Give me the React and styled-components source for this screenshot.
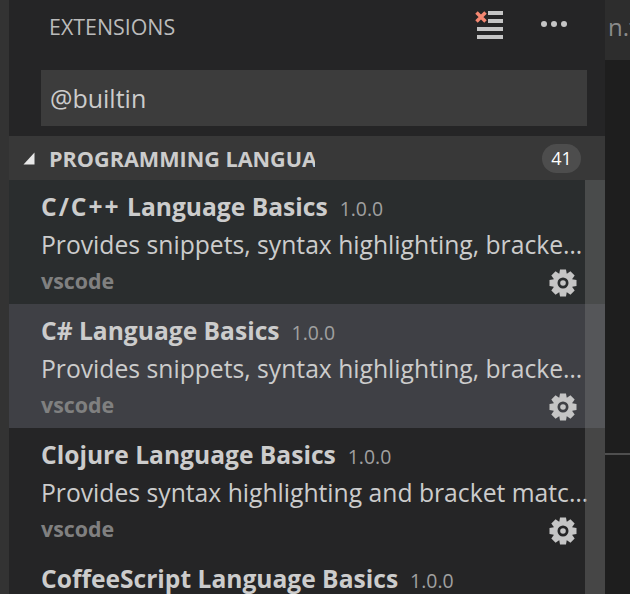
import React from 'react'
import styled, { createGlobalStyle } from 'styled-components'

const GlobalStyle = createGlobalStyle`
  html, body {
    margin: 0;
    padding: 0;
    background: #1e1e1e;
  }
  body {
    font-family: "Open Sans", "Noto Sans", sans-serif;
  }
`
const Window = styled.div`
  display: flex;
  width: 630px;
  height: 594px;
  overflow: hidden;
`
const ActivityBar = styled.div`
  width: 9px;
  flex: none;
  background: #333333;
`
const SideBar = styled.div`
  width: 596px;
  flex: none;
  background: #252526;
  display: flex;
  flex-direction: column;
`
const TitleBar = styled.div`
  display: flex;
  align-items: center;
  height: 52px;
  padding: 0 37px 0 40px;
`
const Title = styled.div`
  flex: 1;
  color: #bbbbbb;
  font-size: 21.4px;
`
const TitleActions = styled.div`
  display: flex;
  align-items: center;
  gap: 35px;
`
const SearchWrap = styled.div`
  padding: 18px 18px 10px 32px;
`
const SearchBox = styled.div`
  height: 56px;
  line-height: 56px;
  padding-left: 9px;
  background: #3c3c3c;
  color: #cccccc;
  font-size: 25px;
`
const SectionHeader = styled.div`
  display: flex;
  align-items: center;
  height: 44px;
  background: #383838;
  padding: 0 24px 0 14px;
`
const SectionTitle = styled.div`
  width: 266px;
  margin-left: 14px;
  overflow: hidden;
  white-space: nowrap;
  color: #cccccc;
  font-size: 21.6px;
  font-weight: 700;
`
const Badge = styled.div`
  margin-left: auto;
  width: 39px;
  height: 29px;
  line-height: 29px;
  border-radius: 15px;
  background: #4d4d4d;
  color: #ffffff;
  font-size: 18px;
  text-align: center;
`
const List = styled.div`
  flex: 1;
  position: relative;
  overflow: hidden;
`
const Scrollbar = styled.div`
  position: absolute;
  top: 0;
  right: 0;
  bottom: 0;
  width: 20px;
  background: rgba(121, 121, 121, 0.4);
`
const Row = styled.div`
  height: 124px;
  box-sizing: border-box;
  padding: 9px 0 0 32px;
  background: ${p => p.$state === 'selected' ? '#3f4045' : p.$state === 'focus' ? '#2a2d2e' : 'transparent'};
`
const NameLine = styled.div`
  display: flex;
  align-items: baseline;
  gap: 12px;
  height: 36px;
  line-height: 36px;
`
const Name = styled.span`
  color: #cccccc;
  font-size: 24.6px;
  font-weight: 700;
`
const WideLead = styled.span`
  letter-spacing: 2px;
`
const Version = styled.span`
  color: #a0a0a0;
  font-size: 19.4px;
`
const Description = styled.div`
  margin-top: 1px;
  color: #cccccc;
  font-size: 24.7px;
  line-height: 38px;
  white-space: nowrap;
  overflow: hidden;
  text-overflow: ellipsis;
  padding-right: 16px;
`
const Footer = styled.div`
  display: flex;
  align-items: center;
  justify-content: space-between;
  padding-right: 28px;
  height: 38px;
`
const Author = styled.span`
  color: #808080;
  font-size: 21.4px;
  font-weight: 700;
  margin-bottom: 6px;
`
const Editor = styled.div`
  flex: 1;
  min-width: 0;
  display: flex;
  flex-direction: column;
`
const TabStrip = styled.div`
  height: 60px;
  flex: none;
  background: #2d2d2d;
  overflow: hidden;
  white-space: nowrap;
  padding-left: 3px;
  color: #8a8a8a;
  font-size: 24px;
  line-height: 54px;
`
const EditorRule = styled.div`
  height: 2px;
  margin-top: 393px;
  background: #4f4f4f;
`

const ClearIcon = () => (
  <svg width="30" height="30" viewBox="0 0 30 30">
    <g fill="#c5c5c5">
      <rect x="13" y="0" width="15" height="4" />
      <rect x="13" y="8" width="15" height="4" />
      <rect x="2" y="16" width="26" height="4" />
      <rect x="2" y="24" width="26" height="4" />
    </g>
    <path d="M1.500 1.500 L10.500 10.500 M10.500 1.500 L1.500 10.500" stroke="#252526" strokeWidth="6" />
    <path d="M1.500 1.500 L10.500 10.500 M10.500 1.500 L1.500 10.500" stroke="#f48771" strokeWidth="3.500" />
  </svg>
)

const MoreIcon = () => (
  <svg width="28" height="12" viewBox="0 0 28 12">
    <g fill="#c5c5c5">
      <circle cx="4" cy="4" r="3" />
      <circle cx="14" cy="4" r="3" />
      <circle cx="24" cy="4" r="3" />
    </g>
  </svg>
)

const GEAR_TEETH = [0, 45, 90, 135, 180, 225, 270, 315]

const Gear = () => (
  <svg width="28" height="28" viewBox="0 0 28 28">
    <g fill="#c5c5c5">
      {GEAR_TEETH.map(angle => (
        <path key={angle} d="M11 0.500h6l1 6h-8z" transform={`rotate(${angle} 14 14)`} />
      ))}
      <path fillRule="evenodd" d="M14 4a10 10 0 1 0 0 20 10 10 0 0 0 0-20zM14 8.500a5.500 5.500 0 1 1 0 11 5.500 5.500 0 0 1 0-11z" />
      <circle cx="14" cy="14" r="2.800" />
    </g>
  </svg>
)

const extensions = [
  { lead: 'C/C++', name: ' Language Basics', desc: 'Provides snippets, syntax highlighting, bracket matching and folding in C/C++ files.', state: 'focus' },
  { name: 'C# Language Basics', desc: 'Provides snippets, syntax highlighting, bracket matching and folding in C# files.', state: 'selected' },
  { name: 'Clojure Language Basics', desc: 'Provides syntax highlighting and bracket matching in Clojure files.' },
  { name: 'CoffeeScript Language Basics', desc: 'Provides snippets, syntax highlighting, bracket matching and folding.' }
]

const App = () => (
  <Window>
    <GlobalStyle />
    <ActivityBar />
    <SideBar>
      <TitleBar>
        <Title>EXTENSIONS</Title>
        <TitleActions>
          <ClearIcon />
          <MoreIcon />
        </TitleActions>
      </TitleBar>
      <SearchWrap>
        <SearchBox>@builtin</SearchBox>
      </SearchWrap>
      <SectionHeader>
        <svg width="12" height="13" viewBox="0 0 12 13"><path d="M11.500 0.500v12H0.500z" fill="#e8e8e8" /></svg>
        <SectionTitle>PROGRAMMING LANGUAGES</SectionTitle>
        <Badge>41</Badge>
      </SectionHeader>
      <List>
        {extensions.map(ext => (
          <Row key={ext.name} $state={ext.state}>
            <NameLine>
              <Name>{ext.lead && <WideLead>{ext.lead}</WideLead>}{ext.name}</Name>
              <Version>1.0.0</Version>
            </NameLine>
            <Description>{ext.desc}</Description>
            <Footer>
              <Author>vscode</Author>
              <Gear />
            </Footer>
          </Row>
        ))}
        <Scrollbar />
      </List>
    </SideBar>
    <Editor>
      <TabStrip>n.ts</TabStrip>
      <EditorRule />
    </Editor>
  </Window>
)

export default App
